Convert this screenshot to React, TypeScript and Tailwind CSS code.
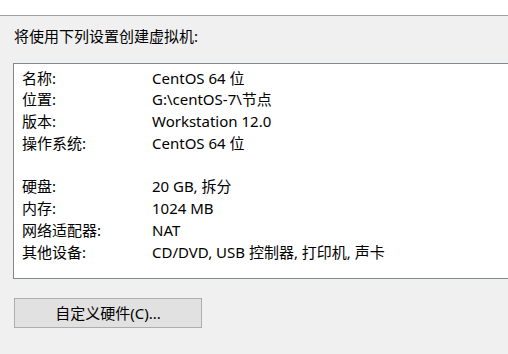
const rows: [string, string][] = [
  ['名称:', 'CentOS 64 位'],
  ['位置:', 'G:\\centOS-7\\节点'],
  ['版本:', 'Workstation 12.0'],
  ['操作系统:', 'CentOS 64 位'],
  ['', ''],
  ['硬盘:', '20 GB, 拆分'],
  ['内存:', '1024 MB'],
  ['网络适配器:', 'NAT'],
  ['其他设备:', 'CD/DVD, USB 控制器, 打印机, 声卡'],
];

const font = { fontFamily: '"Segoe UI", "Noto Sans", "Noto Sans CJK SC", sans-serif' };

export default function App() {
  return (
    <div
      className="flex h-[354px] w-[508px] flex-col overflow-hidden bg-[#f0f0f0] text-[15px] text-black"
      style={font}
    >
      <div className="h-[16px] shrink-0 border-b border-[#a0a0a0] bg-white" />

      <p className="ml-[14px] mt-[11px] h-[18px] leading-[18px]">将使用下列设置创建虚拟机:</p>

      <div className="ml-[13px] mt-[18px] h-[216px] w-[500px] border border-r-0 border-[#828790] bg-white pl-[8px] pt-[3px]">
        {rows.map(([label, value], i) => (
          <div key={i} className="flex h-[21.75px] items-center whitespace-nowrap">
            <span className="w-[130px] shrink-0">{label}</span>
            <span>{value}</span>
          </div>
        ))}
      </div>

      <button
        type="button"
        className="ml-[14px] mt-[19px] h-[30px] w-[188px] border border-[#adadad] bg-[#e1e1e1] leading-none"
      >
        自定义硬件(C)...
      </button>
    </div>
  );
}
